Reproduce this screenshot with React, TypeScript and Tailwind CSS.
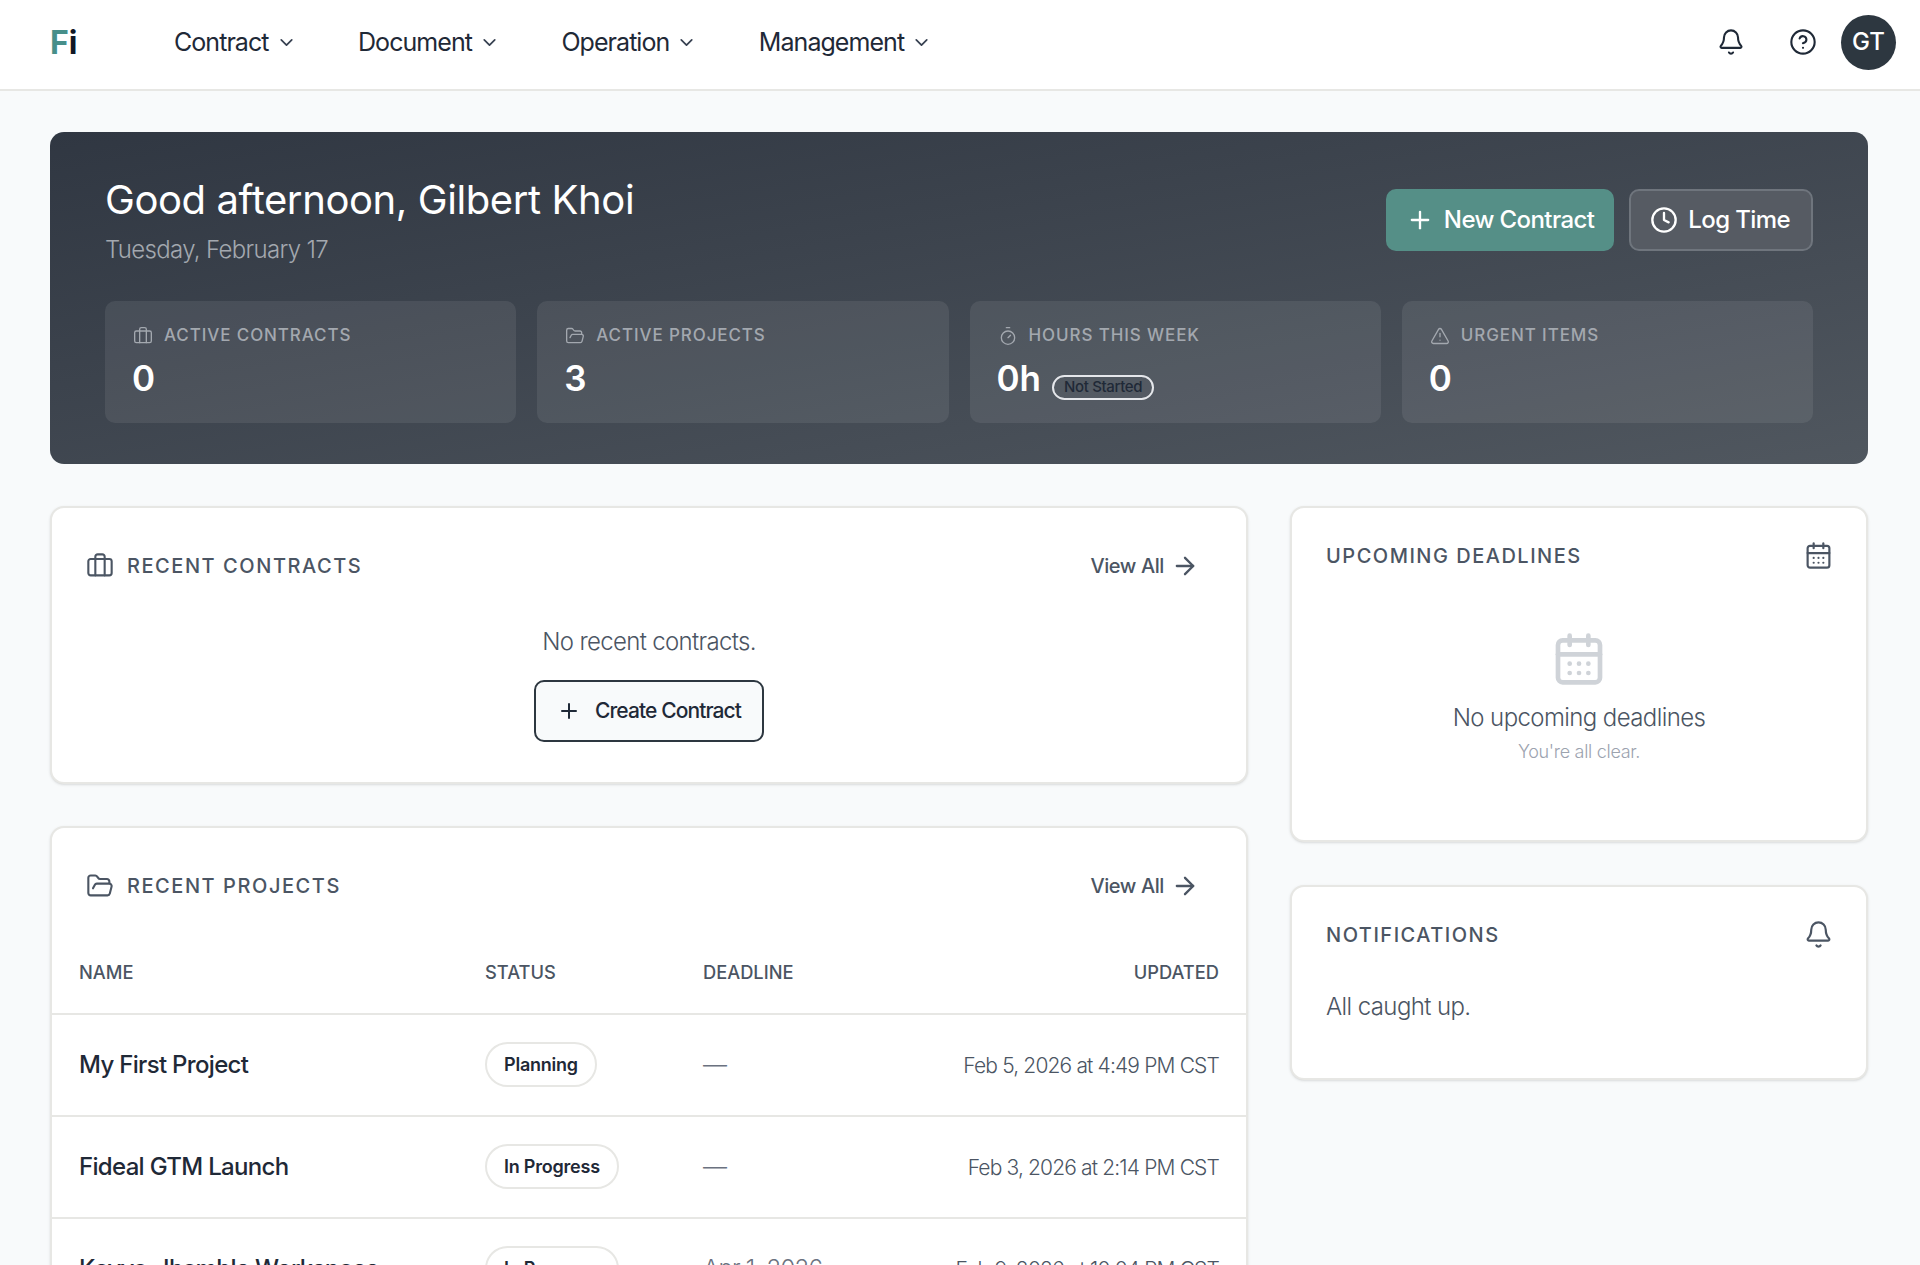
import React from "react";
import {
  Bell,
  Briefcase,
  ArrowRight,
  CalendarDays,
  ChevronDown,
  CircleHelp,
  Clock,
  FolderOpen,
  Plus,
  Timer,
  TriangleAlert,
} from "lucide-react";

const navItems = ["Contract", "Document", "Operation", "Management"];

const NavItem = ({ label }: { label: string }) => (
  <div className="flex items-center gap-[7px] text-[25px] leading-[32px] tracking-[-0.95px] text-[#1f2937]">
    <span>{label}</span>
    <ChevronDown className="w-[21px] h-[21px] text-[#374151]" strokeWidth={2} />
  </div>
);

const Stat = ({
  icon,
  label,
  value,
  badge,
}: {
  icon: React.ReactNode;
  label: string;
  value: string;
  badge?: string;
}) => (
  <div className="h-[122px] rounded-[10px] bg-white/8 px-[28px] pt-[24px]">
    <div className="flex items-center gap-[11px] h-[22px] text-[#a3a8af]">
      {icon}
      <span className="text-[17px] font-medium tracking-[0.9px] uppercase">{label}</span>
    </div>
    <div className="flex items-center gap-[11px] mt-[8px] h-[46px]">
      <span className="-ml-[1px] text-[35px] font-semibold text-white leading-[46px]">{value}</span>
      {badge && (
        <span className="mt-[18px] h-[25px] flex items-center rounded-full border-2 border-[#e5e7eb] px-[10px] text-[15px] tracking-[-0.35px] font-medium text-[#1f2937]">
          {badge}
        </span>
      )}
    </div>
  </div>
);

const ViewAll = () => (
  <div className="flex items-center gap-[7px] text-[20px] font-medium tracking-[-0.4px] text-[#4b5563]">
    <span>View All</span>
    <ArrowRight className="w-[28px] h-[28px]" strokeWidth={2} />
  </div>
);

const CardTitle = ({ icon, title }: { icon: React.ReactNode; title: string }) => (
  <div className="flex items-center gap-[13px] text-[#4b5563]">
    {icon}
    <span className="text-[20px] font-medium tracking-[1.55px] uppercase">{title}</span>
  </div>
);

const Row = ({
  name,
  status,
  deadline,
  updated,
}: {
  name: string;
  status: string;
  deadline: string;
  updated: string;
}) => (
  <div className="flex items-center h-[102px] border-t-2 border-[#e7e7e4] shrink-0">
    <div className="w-[433px] pl-[27px] text-[24px] font-medium tracking-[-0.68px] text-[#1f2937]">{name}</div>
    <div className="w-[218px] -mt-[2px]">
      <span className="inline-flex items-center h-[45px] rounded-full border-2 border-[#e7e7e4] px-[17px] text-[18px] font-semibold tracking-[-0.22px] text-[#1f2937]">
        {status}
      </span>
    </div>
    <div className="w-[180px] text-[24px] tracking-[-0.78px] font-light text-[#6b7280]">{deadline}</div>
    <div className="flex-1 pr-[27px] pt-[1px] text-right text-[21px] font-light tracking-[-0.85px] text-[#4b5563]">{updated}</div>
  </div>
);

export default function App() {
  return (
    <div className="h-[1265px] overflow-hidden bg-[#f8fafb] font-['Inter',sans-serif]">
      <header className="flex items-center justify-between h-[91px] bg-white border-b-2 border-[#e7e7e4] pl-[50px] pr-[24px] pb-[5px]">
        <div className="flex items-center">
          <div className="w-[124px] mt-[1px] text-[32px] font-bold leading-none">
            <span className="text-[#478f8a]">F</span>
            <span className="text-[#111827]">i</span>
          </div>
          <nav className="flex items-center gap-[61.5px]">
            {navItems.map((x) => (
              <NavItem key={x} label={x} />
            ))}
          </nav>
        </div>
        <div className="flex items-center">
          <Bell className="w-[28px] h-[28px] text-[#1f2937]" strokeWidth={1.8} />
          <CircleHelp className="w-[28px] h-[28px] ml-[44px] text-[#1f2937]" strokeWidth={1.8} />
          <div className="flex items-center justify-center w-[55px] h-[55px] ml-[24px] rounded-full bg-[#2d3740] text-[24px] font-medium text-white">
            GT
          </div>
        </div>
      </header>

      <main className="pl-[50px] pr-[52px] pt-[41px]">
        <section className="h-[332px] rounded-[14px] bg-linear-to-br from-[#303742] to-[#50575f] px-[55px] pt-[40px]">
          <div className="flex justify-between h-[129px]">
            <div>
              <h1 className="text-[40px] leading-[56px] tracking-[-0.4px] text-white">Good afternoon, Gilbert Khoi</h1>
              <p className="text-[24px] font-light leading-[32px] mt-[6px] tracking-[-0.67px] text-[#a3a8af]">
                Tuesday, February 17
              </p>
            </div>
            <div className="flex gap-[15px] mt-[17px]">
              <div className="flex items-center gap-[10px] h-[62px] px-[20px] rounded-[10px] bg-[#558f87] text-[24px] font-medium tracking-[-0.6px] text-white">
                <Plus className="w-[28px] h-[28px]" strokeWidth={2} />
                New Contract
              </div>
              <div className="flex items-center gap-[10px] h-[62px] pl-[19px] pr-[21px] rounded-[10px] border-2 border-[#6f757d] bg-[#565b63] text-[24px] font-medium tracking-[-0.6px] text-white">
                <Clock className="w-[28px] h-[28px]" strokeWidth={2} />
                Log Time
              </div>
            </div>
          </div>
          <div className="grid grid-cols-4 gap-[21px]">
            <Stat icon={<Briefcase className="w-[20px] h-[20px]" strokeWidth={1.6} />} label="Active Contracts" value="0" />
            <Stat icon={<FolderOpen className="w-[20px] h-[20px]" strokeWidth={1.6} />} label="Active Projects" value="3" />
            <Stat icon={<Timer className="w-[20px] h-[20px]" strokeWidth={1.6} />} label="Hours This Week" value="0h" badge="Not Started" />
            <Stat icon={<TriangleAlert className="w-[20px] h-[20px]" strokeWidth={1.6} />} label="Urgent Items" value="0" />
          </div>
        </section>

        <div className="grid grid-cols-[1198px_1fr] gap-[42px] mt-[42px] items-start">
          <div className="flex flex-col gap-[42px]">
            <div className="h-[278px] rounded-[14px] border-2 border-[#e7e7e4] bg-white shadow-sm">
              <div className="flex items-center justify-between h-[116px] pl-[34px] pr-[47px]">
                <CardTitle icon={<Briefcase className="w-[28px] h-[28px]" strokeWidth={1.8} />} title="Recent Contracts" />
                <ViewAll />
              </div>
              <div className="flex flex-col items-center">
                <p className="text-[24px] font-light leading-[36px] tracking-[-0.67px] text-[#4b5563]">No recent contracts.</p>
                <div className="flex items-center gap-[14px] h-[62px] mt-[20px] px-[21px] rounded-[10px] border-2 border-[#2d3740] bg-[#f8fafb] text-[21px] font-medium tracking-[-0.9px] text-[#1f2937]">
                  <Plus className="w-[24px] h-[24px]" strokeWidth={2} />
                  Create Contract
                </div>
              </div>
            </div>

            <div className="h-[600px] rounded-[14px] border-2 border-[#e7e7e4] bg-white shadow-sm overflow-hidden">
              <div className="flex items-center justify-between h-[116px] pl-[34px] pr-[47px]">
                <CardTitle icon={<FolderOpen className="w-[28px] h-[28px]" strokeWidth={1.8} />} title="Recent Projects" />
                <ViewAll />
              </div>
              <div className="flex items-center h-[69px] pb-[12px] text-[18.3px] font-medium uppercase text-[#4b5563]">
                <div className="w-[433px] pl-[27px]">Name</div>
                <div className="w-[218px]">Status</div>
                <div className="w-[180px]">Deadline</div>
                <div className="flex-1 pr-[27px] text-right">Updated</div>
              </div>
              <Row name="My First Project" status="Planning" deadline="—" updated="Feb 5, 2026 at 4:49 PM CST" />
              <Row name="Fideal GTM Launch" status="In Progress" deadline="—" updated="Feb 3, 2026 at 2:14 PM CST" />
              <Row name="Kavya-Jhamble Workspace" status="In Progress" deadline="Apr 1, 2026" updated="Feb 9, 2026 at 10:04 PM CST" />
            </div>
          </div>

          <div className="flex flex-col gap-[43px]">
            <div className="h-[336px] rounded-[14px] border-2 border-[#e7e7e4] bg-white shadow-sm pl-[34px] pr-[33px]">
              <div className="flex items-center justify-between h-[96px]">
                <span className="text-[20px] font-medium tracking-[1.5px] uppercase text-[#4b5563]">Upcoming Deadlines</span>
                <CalendarDays className="w-[29px] h-[29px] -mt-[2px] text-[#4b5563]" strokeWidth={1.8} />
              </div>
              <div className="flex flex-col items-center mt-[27px] -ml-[1px]">
                <CalendarDays className="w-[56px] h-[56px] text-[#cfd3d8]" strokeWidth={2} />
                <p className="text-[24px] font-light leading-[32px] mt-[15px] tracking-[-0.6px] text-[#4b5563]">No upcoming deadlines</p>
                <p className="text-[18px] font-light leading-[26px] mt-[5px] tracking-[-0.3px] text-[#9ca3af]">You're all clear.</p>
              </div>
            </div>
            <div className="h-[195px] rounded-[14px] border-2 border-[#e7e7e4] bg-white shadow-sm pl-[34px] pr-[33px]">
              <div className="flex items-center justify-between h-[96px]">
                <span className="text-[20px] font-medium tracking-[1.5px] uppercase text-[#4b5563]">Notifications</span>
                <Bell className="w-[29px] h-[29px] -mt-[2px] text-[#4b5563]" strokeWidth={1.8} />
              </div>
              <p className="text-[24px] font-light leading-[36px] mt-[6px] tracking-[-0.6px] text-[#4b5563]">All caught up.</p>
            </div>
          </div>
        </div>
      </main>
    </div>
  );
}
